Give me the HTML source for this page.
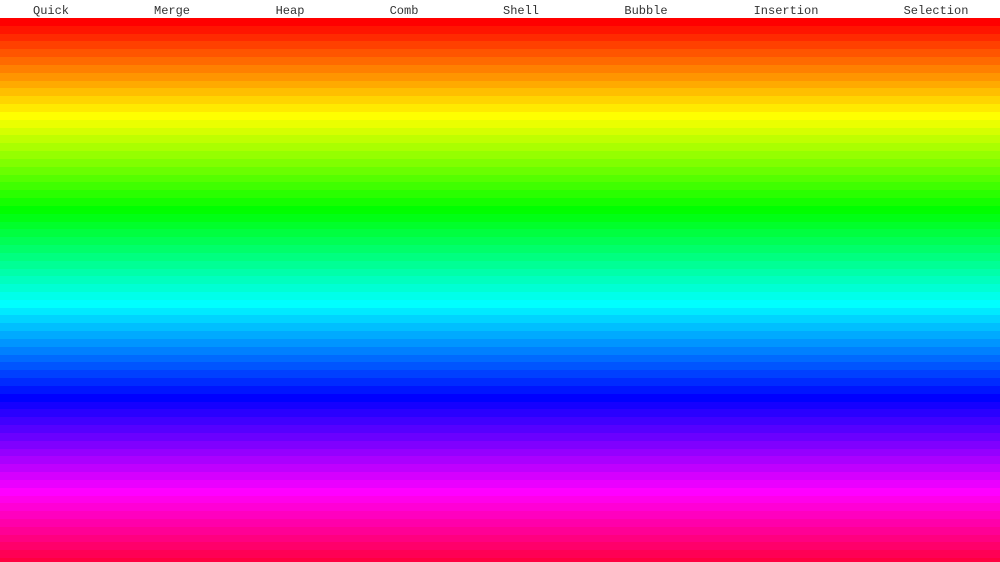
<!DOCTYPE html>
<html><head><style>
html,body{margin:0;padding:0;width:1000px;height:562px;overflow:hidden;background:#fff}
.h{position:absolute;top:0;left:0;width:1000px;height:18px;background:#fff}
.h span{position:absolute;top:4px;transform:translateX(-50%);font:12px "Liberation Mono",monospace;color:#333;white-space:nowrap}
#s{position:absolute;top:18px;left:0;width:1000px;height:544px;overflow:hidden}
#s div{height:7.83px}
</style></head><body>
<div class="h">
<span style="left:51px">Quick</span>
<span style="left:172px">Merge</span>
<span style="left:290px">Heap</span>
<span style="left:404px">Comb</span>
<span style="left:521px">Shell</span>
<span style="left:646px">Bubble</span>
<span style="left:786px">Insertion</span>
<span style="left:936px">Selection</span>
</div>
<div id="s">
<div style="background:hsl(0,100%,50%)"></div><div style="background:hsl(5,100%,50%)"></div><div style="background:hsl(10,100%,50%)"></div><div style="background:hsl(15,100%,50%)"></div><div style="background:hsl(20,100%,50%)"></div><div style="background:hsl(25,100%,50%)"></div><div style="background:hsl(30,100%,50%)"></div><div style="background:hsl(35,100%,50%)"></div><div style="background:hsl(40,100%,50%)"></div><div style="background:hsl(45,100%,50%)"></div><div style="background:hsl(50,100%,50%)"></div><div style="background:hsl(55,100%,50%)"></div>
<div style="background:hsl(60,100%,50%)"></div><div style="background:hsl(65,100%,50%)"></div><div style="background:hsl(70,100%,50%)"></div><div style="background:hsl(75,100%,50%)"></div><div style="background:hsl(80,100%,50%)"></div><div style="background:hsl(85,100%,50%)"></div><div style="background:hsl(90,100%,50%)"></div><div style="background:hsl(95,100%,50%)"></div><div style="background:hsl(100,100%,50%)"></div><div style="background:hsl(105,100%,50%)"></div><div style="background:hsl(110,100%,50%)"></div><div style="background:hsl(115,100%,50%)"></div>
<div style="background:hsl(120,100%,50%)"></div><div style="background:hsl(125,100%,50%)"></div><div style="background:hsl(130,100%,50%)"></div><div style="background:hsl(135,100%,50%)"></div><div style="background:hsl(140,100%,50%)"></div><div style="background:hsl(145,100%,50%)"></div><div style="background:hsl(150,100%,50%)"></div><div style="background:hsl(155,100%,50%)"></div><div style="background:hsl(160,100%,50%)"></div><div style="background:hsl(165,100%,50%)"></div><div style="background:hsl(170,100%,50%)"></div><div style="background:hsl(175,100%,50%)"></div>
<div style="background:hsl(180,100%,50%)"></div><div style="background:hsl(185,100%,50%)"></div><div style="background:hsl(190,100%,50%)"></div><div style="background:hsl(195,100%,50%)"></div><div style="background:hsl(200,100%,50%)"></div><div style="background:hsl(205,100%,50%)"></div><div style="background:hsl(210,100%,50%)"></div><div style="background:hsl(215,100%,50%)"></div><div style="background:hsl(220,100%,50%)"></div><div style="background:hsl(225,100%,50%)"></div><div style="background:hsl(230,100%,50%)"></div><div style="background:hsl(235,100%,50%)"></div>
<div style="background:hsl(240,100%,50%)"></div><div style="background:hsl(245,100%,50%)"></div><div style="background:hsl(250,100%,50%)"></div><div style="background:hsl(255,100%,50%)"></div><div style="background:hsl(260,100%,50%)"></div><div style="background:hsl(265,100%,50%)"></div><div style="background:hsl(270,100%,50%)"></div><div style="background:hsl(275,100%,50%)"></div><div style="background:hsl(280,100%,50%)"></div><div style="background:hsl(285,100%,50%)"></div><div style="background:hsl(290,100%,50%)"></div><div style="background:hsl(295,100%,50%)"></div>
<div style="background:hsl(300,100%,50%)"></div><div style="background:hsl(305,100%,50%)"></div><div style="background:hsl(310,100%,50%)"></div><div style="background:hsl(315,100%,50%)"></div><div style="background:hsl(320,100%,50%)"></div><div style="background:hsl(325,100%,50%)"></div><div style="background:hsl(330,100%,50%)"></div><div style="background:hsl(335,100%,50%)"></div><div style="background:hsl(340,100%,50%)"></div><div style="background:hsl(345,100%,50%)"></div><div style="background:hsl(350,100%,50%)"></div><div style="background:hsl(355,100%,50%)"></div>
</div>
</body></html>
